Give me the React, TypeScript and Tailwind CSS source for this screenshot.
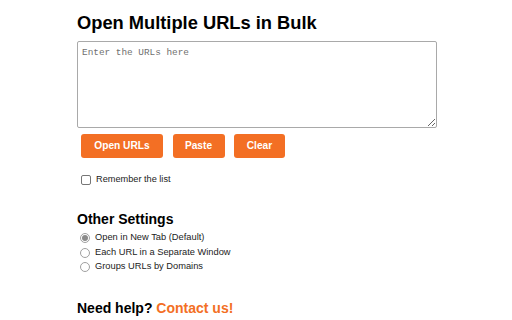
import { useState } from "react";

const options = [
  "Open in New Tab (Default)",
  "Each URL in a Separate Window",
  "Groups URLs by Domains",
];

function OrangeButton({ text, width }: { text: string; width: string }) {
  return (
    <button
      className={`${width} h-[24px] rounded-[3px] bg-[#f36f24] text-white text-[10.2px] font-bold leading-none flex items-center justify-center`}
    >
      {text}
    </button>
  );
}

export default function App() {
  const [mode, setMode] = useState(0);
  const [remember, setRemember] = useState(false);

  return (
    <div className="w-[512px] h-[320px] bg-white font-['Liberation_Sans',Arial,sans-serif] text-[#222] overflow-hidden">
      <div className="ml-[77px] w-[360px] pt-[12px]">
        <h1 className="text-[18.3px] leading-[22px] font-bold text-black">
          Open Multiple URLs in Bulk
        </h1>

        <textarea
          placeholder="Enter the URLs here"
          className="block mt-[7px] w-[360px] h-[87px] border border-[#a9a9a9] rounded-[2px] pl-[4px] pt-[5px] font-['Liberation_Mono',monospace] text-[9.4px] leading-[12px] placeholder:text-[#6f6f6f] outline-none"
        />

        <div className="flex mt-[6px] ml-[4px] gap-[9.5px]">
          <OrangeButton text="Open URLs" width="w-[82px]" />
          <OrangeButton text="Paste" width="w-[52px]" />
          <OrangeButton text="Clear" width="w-[51px]" />
        </div>

        <label className="flex items-center h-[12px] mt-[16px] ml-[4px] gap-[5px] text-[9.2px]">
          <input
            type="checkbox"
            checked={remember}
            onChange={() => setRemember(!remember)}
            className="appearance-none w-[10px] h-[10px] border border-[#767676] rounded-[2px] bg-white checked:bg-[#f36f24]"
          />
          Remember the list
        </label>

        <h2 className="mt-[25px] text-[14px] leading-[16px] font-bold text-black">
          Other Settings
        </h2>

        <div className="mt-[4px] ml-[3px]">
          {options.map((o, i) => (
            <label
              key={o}
              className="flex items-center h-[14.5px] gap-[5px] text-[9.3px] cursor-pointer"
              onClick={() => setMode(i)}
            >
              <span className="w-[10px] h-[10px] rounded-full border border-[#a0a0a0] bg-white flex items-center justify-center">
                {mode === i && (
                  <span className="w-[6px] h-[6px] rounded-full bg-[#8a8a8a]" />
                )}
              </span>
              {o}
            </label>
          ))}
        </div>

        <p className="mt-[25.5px] text-[14px] leading-[16px] font-bold text-black">
          Need help? <span className="text-[#f36f24]">Contact us!</span>
        </p>
      </div>
    </div>
  );
}
